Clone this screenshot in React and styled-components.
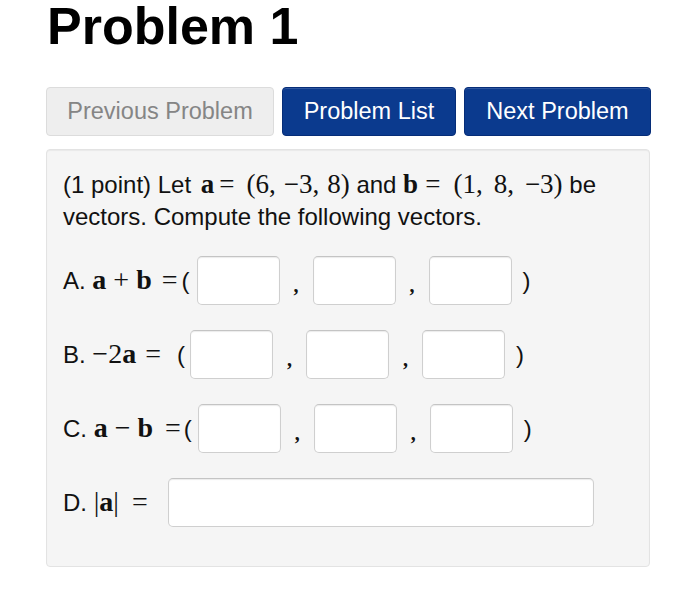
import React from "react";
import styled, { createGlobalStyle } from "styled-components";

const Global = createGlobalStyle`
  html, body { margin: 0; padding: 0; background: #ffffff; }
  body { font-family: "Liberation Sans", Arial, sans-serif; color: #000; }
`;

const Page = styled.div`
  width: 604px;
  margin-left: 46px;
  display: flex;
  flex-direction: column;
`;

const Title = styled.h1`
  margin: -3px 0 32px 1px;
  font-size: 52px;
  line-height: 58px;
  font-weight: 700;
  color: #000;
`;

const Nav = styled.div`
  display: flex;
  gap: 8px;
  margin-bottom: 13px;
`;

const NavButton = styled.button`
  height: 49px;
  padding: 0;
  flex: 0 0 ${(p) => p.$w}px;
  border-radius: 4px;
  font-family: "Liberation Sans", Arial, sans-serif;
  font-size: 23.5px;
  border: 1px solid ${(p) => (p.$disabled ? "#dcdcdc" : "#062d78")};
  background: ${(p) => (p.$disabled ? "#eeeeee" : "#0b3a8e")};
  color: ${(p) => (p.$disabled ? "#858585" : "#ffffff")};
  box-shadow: ${(p) => (p.$disabled ? "none" : "inset 0 1px 0 rgba(255,255,255,0.15)")};
  white-space: nowrap;
`;

const Panel = styled.div`
  background: #f5f5f5;
  border: 1px solid #e3e3e3;
  border-radius: 4px;
  box-shadow: inset 0 1px 1px rgba(0, 0, 0, 0.05);
  padding: 19px 16px 39px;
  display: flex;
  flex-direction: column;
`;

const Intro = styled.p`
  margin: 0 0 23px;
  font-size: 24px;
  line-height: 32px;
  color: #111;
`;

const M = styled.span`
  font-family: "Liberation Serif", "Times New Roman", serif;
  font-size: ${(p) => p.$size || 27}px;
  line-height: 1;
  font-weight: ${(p) => (p.$b ? 700 : 400)};
  margin: 0 ${(p) => p.$r || 0}px 0 ${(p) => p.$l || 0}px;
`;

const Paren = styled.span`
  margin-left: ${(p) => p.$l || 0}px;
`;

const Rows = styled.div`
  display: flex;
  flex-direction: column;
  gap: 25px;
`;

const Row = styled.div`
  display: flex;
  align-items: center;
  height: 49px;
  font-size: 24px;
  color: #111;
  white-space: pre;
`;

const Label = styled.span`
  display: inline-flex;
  align-items: baseline;
  margin-right: ${(p) => p.$gap || 0}px;
`;

const Box = styled.div`
  width: ${(p) => p.$w || 83}px;
  height: 49px;
  box-sizing: border-box;
  background: #ffffff;
  border: 1px solid #cfcfcf;
  border-top-color: #c4c4c4;
  border-radius: 5px;
  box-shadow: inset 0 1px 1px rgba(0, 0, 0, 0.08);
  flex: 0 0 auto;
`;

const Comma = styled.span`
  width: 33px;
  text-align: center;
  font-family: "Liberation Serif", "Times New Roman", serif;
  font-weight: 700;
  font-size: 20px;
  padding-top: 10px;
`;

const Close = styled.span`
  margin-left: 11px;
  font-size: 24px;
`;

const Triple = ({ label, gap }) => (
  <Row>
    <Label $gap={gap}>{label}</Label>
    <Box />
    <Comma>,</Comma>
    <Box />
    <Comma>,</Comma>
    <Box />
    <Close>)</Close>
  </Row>
);

const Vec = ({ items, sep }) => (
  <>
    <M>(</M>
    {items.map((v, i) => (
      <React.Fragment key={i}>
        <M>{v}</M>
        {i < items.length - 1 && <M $r={sep}>,</M>}
      </React.Fragment>
    ))}
    <M>)</M>
  </>
);

export default function App() {
  return (
    <>
      <Global />
      <Page>
        <Title>Problem 1</Title>
        <Nav>
          <NavButton $disabled $w={228}>Previous Problem</NavButton>
          <NavButton $w={174}>Problem List</NavButton>
          <NavButton $w={187}>Next Problem</NavButton>
        </Nav>
        <Panel>
          <Intro>
            (1 point) Let <M $b $l={3}>a</M>
            <M $l={5} $r={12}>=</M>
            <Vec items={["6", "−3", "8"]} sep={8} /> and <M $b>b</M>
            <M $l={7} $r={13}>=</M>
            <Vec items={["1", "8", "−3"]} sep={11} /> be vectors. Compute the following vectors.
          </Intro>
          <Rows>
            <Triple
              gap={7}
              label={
                <>
                  A. <M $size={28} $b>a</M>
                  <M $size={28} $l={7} $r={7}>+</M>
                  <M $size={28} $b>b</M>
                  <M $size={28} $l={10}>=</M>
                  <Paren $l={4}>(</Paren>
                </>
              }
            />
            <Triple
              gap={5}
              label={
                <>
                  B. <M $size={28}>−2</M>
                  <M $size={28} $b>a</M>
                  <M $size={28} $l={9}>=</M>
                  <Paren $l={16}>(</Paren>
                </>
              }
            />
            <Triple
              gap={6}
              label={
                <>
                  C. <M $size={28} $b>a</M>
                  <M $size={28} $l={7} $r={7}>−</M>
                  <M $size={28} $b>b</M>
                  <M $size={28} $l={12}>=</M>
                  <Paren $l={3}>(</Paren>
                </>
              }
            />
            <Row>
              <Label $gap={20}>
                D. <M $size={28}>|</M>
                <M $size={28} $b>a</M>
                <M $size={28}>|</M>
                <M $size={28} $l={13}>=</M>
              </Label>
              <Box $w={426} />
            </Row>
          </Rows>
        </Panel>
      </Page>
    </>
  );
}
